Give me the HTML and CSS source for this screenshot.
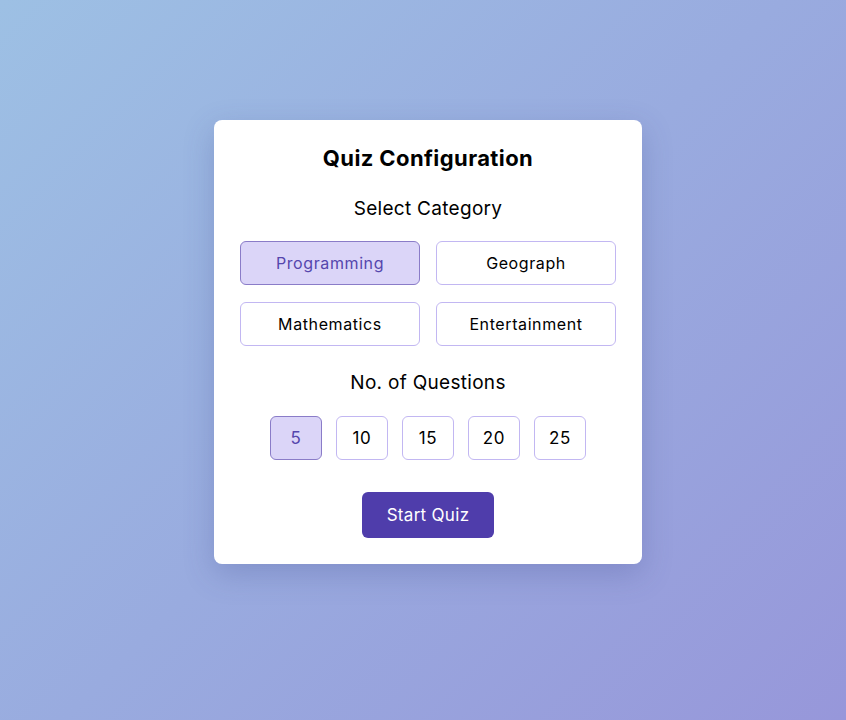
FILE: index.html
```html
<!DOCTYPE html>
<html lang="en">
<head>
    <meta charset="UTF-8">
    <meta name="viewport" content="width=device-width, initial-scale=1.0">
    <title>Quiz Configuration</title>
    <link rel="stylesheet" href="styles.css">
</head>
<body>
    <div class="config">
        <h2 class="config_title">Quiz Configuration</h2>

        <h3 class="config_label">Select Category</h3>
        <div class="category_list">
            <button class="option active">Programming</button>
            <button class="option">Geograph</button>
            <button class="option">Mathematics</button>
            <button class="option">Entertainment</button>
        </div>

        <h3 class="config_label">No. of Questions</h3>
        <div class="count_list">
            <button class="option count active">5</button>
            <button class="option count">10</button>
            <button class="option count">15</button>
            <button class="option count">20</button>
            <button class="option count">25</button>
        </div>

        <button class="start_btn">Start Quiz</button>
    </div>
</body>
</html>
```

FILE: styles.css
```css
*{
    margin: 0;
    padding: 0;
    box-sizing: border-box;
}
body{
    min-height: 100vh;
    font-family: "Inter", "Liberation Sans", sans-serif;
    background: linear-gradient(135deg, #9dc0e4 0%, #99abdf 50%, #9797da 100%);
    display: flex;
    justify-content: center;
    align-items: flex-start;
    padding: 120px 0 0 10px;
}
.config{
    width: 428px;
    background: #fff;
    border-radius: 8px;
    padding: 24px 26px 26px;
    box-shadow: 0 10px 30px rgba(60, 70, 140, 0.25);
    text-align: center;
}
.config_title{
    font-size: 22px;
    line-height: 28px;
    font-weight: 700;
    color: #000;
    letter-spacing: 0.4px;
}
.config_label{
    font-size: 19px;
    line-height: 24px;
    font-weight: 400;
    color: #000;
    letter-spacing: 0.3px;
    margin-top: 25px;
}
.category_list{
    display: grid;
    grid-template-columns: 1fr 1fr;
    gap: 17px 16px;
    margin-top: 20px;
}
.option{
    height: 44px;
    background: #fff;
    border: 1px solid #c2b7f2;
    border-radius: 6px;
    font-family: inherit;
    font-size: 16px;
    letter-spacing: 0.6px;
    color: #000;
    cursor: pointer;
}
.option.active{
    background: #dbd5f8;
    border-color: #8a7cc8;
    color: #5546ad;
}
.count_list{
    display: flex;
    justify-content: center;
    gap: 14px;
    margin-top: 21px;
}
.count{
    width: 52px;
    font-size: 17px;
}
.start_btn{
    margin-top: 32px;
    height: 46px;
    padding: 0 25px;
    background: #4f3dab;
    border: none;
    border-radius: 6px;
    font-family: inherit;
    font-size: 17px;
    letter-spacing: 0.3px;
    color: #fff;
    cursor: pointer;
}
```
